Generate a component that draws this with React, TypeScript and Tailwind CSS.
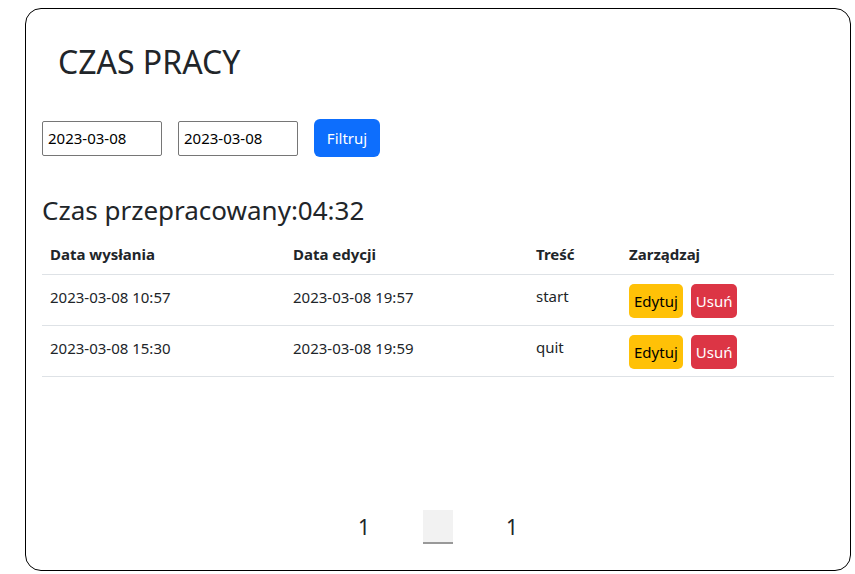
import React from "react";

const rows = [
  { sent: "2023-03-08 10:57", edited: "2023-03-08 19:57", text: "start" },
  { sent: "2023-03-08 15:30", edited: "2023-03-08 19:59", text: "quit" },
];

export default function App() {
  return (
    <div className="w-[855px] h-[574px] bg-white pt-2 pl-[25px] pr-[4px] pb-[3px] font-['Noto_Sans','Open_Sans',sans-serif] text-[#212529]">
      <div className="h-[563px] border border-black rounded-[16px] flex flex-col px-4">
        <h1 className="text-[32px] leading-[40px] pl-4 mt-[33px]">CZAS PRACY</h1>
        <div className="flex items-center mt-[37px] h-[38px]">
          <input
            type="text"
            readOnly
            value="2023-03-08"
            className="w-[120px] h-[35px] border border-[#767676] rounded-[2px] px-[5px] text-[15px] text-black outline-none"
          />
          <input
            type="text"
            readOnly
            value="2023-03-08"
            className="ml-4 w-[120px] h-[35px] border border-[#767676] rounded-[2px] px-[5px] text-[15px] text-black outline-none"
          />
          <button className="ml-4 h-[38px] w-[66px] rounded-[6px] bg-[#0d6efd] text-white text-[15px]">
            Filtruj
          </button>
        </div>
        <h2 className="text-[26px] leading-[32px] mt-[37px]">Czas przepracowany:04:32</h2>
        <table className="mt-[8px] w-[792px] text-[15px] border-collapse">
          <thead>
            <tr className="border-b border-[#dee2e6]">
              <th className="w-[243px] text-left font-bold px-2 py-2 leading-[24px]">Data wysłania</th>
              <th className="w-[243px] text-left font-bold px-2 py-2 leading-[24px]">Data edycji</th>
              <th className="w-[93px] text-left font-bold px-2 py-2 leading-[24px]">Treść</th>
              <th className="text-left font-bold px-2 py-2 leading-[24px]">Zarządzaj</th>
            </tr>
          </thead>
          <tbody>
            {rows.map((r) => (
              <tr key={r.sent} className="border-b border-[#dee2e6]">
                <td className="px-2 py-2 align-top leading-[28px]">{r.sent}</td>
                <td className="px-2 py-2 align-top leading-[28px]">{r.edited}</td>
                <td className="px-2 py-2 align-top leading-[26px]">{r.text}</td>
                <td className="px-2 pt-[9px] pb-[7px] align-top">
                  <div className="flex gap-2">
                    <button className="h-[34px] px-[5px] rounded-[5px] bg-[#ffc107] text-black text-[15px]">Edytuj</button>
                    <button className="h-[34px] px-[5px] rounded-[5px] bg-[#dc3545] text-white text-[15px]">Usuń</button>
                  </div>
                </td>
              </tr>
            ))}
          </tbody>
        </table>
        <div className="mt-auto mb-[26px] flex items-center justify-center">
          <span className="text-[21px] leading-[34px] w-[118px] text-center">1</span>
          <div className="w-[30px] h-[34px] bg-[#f2f2f2] border-b-2 border-[#999999]"></div>
          <span className="text-[21px] leading-[34px] w-[118px] text-center">1</span>
        </div>
      </div>
    </div>
  );
}
